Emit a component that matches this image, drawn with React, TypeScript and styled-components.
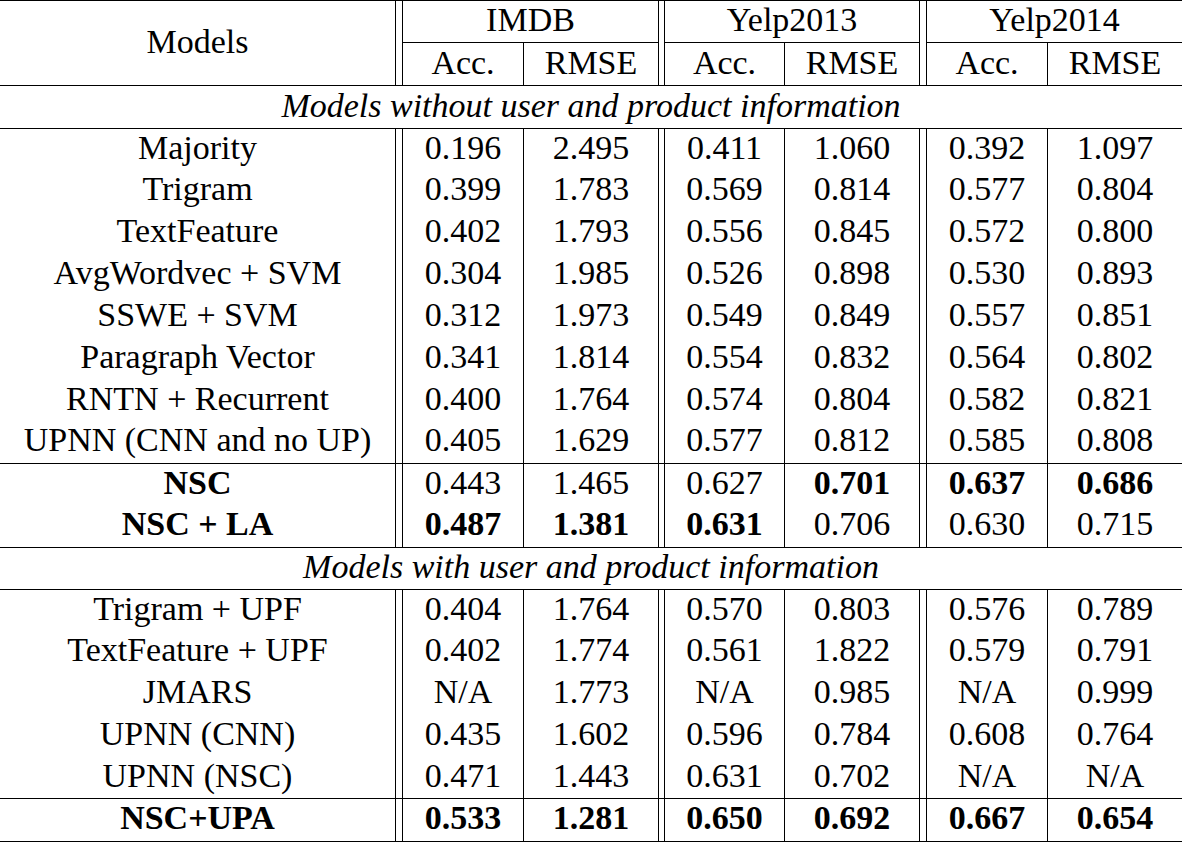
import React from "react";
import styled, { createGlobalStyle } from "styled-components";

const COLS = "395px 7px 121px 135px 6px 120px 135px 7px 121px 135px";
const LINE = "1px solid #000";

const Global = createGlobalStyle`
  html, body { margin: 0; padding: 0; background: #fff; }
  body { font-family: "Liberation Serif", "Times New Roman", serif; color: #000; }
`;

const Table = styled.div`
  width: 1182px;
  font-family: "Liberation Serif", "Times New Roman", serif;
  font-size: 34px;
  color: #000;
`;

const Header = styled.div`
  display: grid;
  grid-template-columns: ${COLS};
  grid-template-rows: 42px 42px;
  border-top: ${LINE};
`;

const HeadCell = styled.div<{ $col: string; $row: string; $line?: boolean; $under?: boolean }>`
  grid-column: ${(p) => p.$col};
  grid-row: ${(p) => p.$row};
  display: flex;
  align-items: center;
  justify-content: center;
  box-sizing: border-box;
  border-left: ${(p) => (p.$line ? LINE : "none")};
  border-bottom: ${(p) => (p.$under ? LINE : "none")};
  line-height: 1;
  padding-bottom: 3px;
  white-space: nowrap;
`;

const Row = styled.div<{ $h: number; $top?: boolean; $bottom?: boolean }>`
  display: grid;
  grid-template-columns: ${COLS};
  box-sizing: border-box;
  height: ${(p) => p.$h}px;
  border-top: ${(p) => (p.$top ? LINE : "none")};
  border-bottom: ${(p) => (p.$bottom ? LINE : "none")};
`;

const Cell = styled.div<{ $line?: boolean; $bold?: boolean }>`
  display: flex;
  align-items: center;
  justify-content: center;
  box-sizing: border-box;
  border-left: ${(p) => (p.$line ? LINE : "none")};
  font-weight: ${(p) => (p.$bold ? 700 : 400)};
  line-height: 1;
  padding-bottom: 3px;
  white-space: nowrap;
`;

const SectionRow = styled.div<{ $h: number }>`
  display: flex;
  align-items: center;
  justify-content: center;
  box-sizing: border-box;
  height: ${(p) => p.$h}px;
  border-top: ${LINE};
  font-style: italic;
  line-height: 1;
  padding-bottom: 3px;
  white-space: nowrap;
`;

type Val = string | [string, boolean];
type DataRow = { name: string; bold?: boolean; vals: Val[] };

const group1: DataRow[] = [
  { name: "Majority", vals: ["0.196", "2.495", "0.411", "1.060", "0.392", "1.097"] },
  { name: "Trigram", vals: ["0.399", "1.783", "0.569", "0.814", "0.577", "0.804"] },
  { name: "TextFeature", vals: ["0.402", "1.793", "0.556", "0.845", "0.572", "0.800"] },
  { name: "AvgWordvec + SVM", vals: ["0.304", "1.985", "0.526", "0.898", "0.530", "0.893"] },
  { name: "SSWE + SVM", vals: ["0.312", "1.973", "0.549", "0.849", "0.557", "0.851"] },
  { name: "Paragraph Vector", vals: ["0.341", "1.814", "0.554", "0.832", "0.564", "0.802"] },
  { name: "RNTN + Recurrent", vals: ["0.400", "1.764", "0.574", "0.804", "0.582", "0.821"] },
  { name: "UPNN (CNN and no UP)", vals: ["0.405", "1.629", "0.577", "0.812", "0.585", "0.808"] },
];

const group2: DataRow[] = [
  {
    name: "NSC",
    bold: true,
    vals: ["0.443", "1.465", "0.627", ["0.701", true], ["0.637", true], ["0.686", true]],
  },
  {
    name: "NSC + LA",
    bold: true,
    vals: [["0.487", true], ["1.381", true], ["0.631", true], "0.706", "0.630", "0.715"],
  },
];

const group3: DataRow[] = [
  { name: "Trigram + UPF", vals: ["0.404", "1.764", "0.570", "0.803", "0.576", "0.789"] },
  { name: "TextFeature + UPF", vals: ["0.402", "1.774", "0.561", "1.822", "0.579", "0.791"] },
  { name: "JMARS", vals: ["N/A", "1.773", "N/A", "0.985", "N/A", "0.999"] },
  { name: "UPNN (CNN)", vals: ["0.435", "1.602", "0.596", "0.784", "0.608", "0.764"] },
  { name: "UPNN (NSC)", vals: ["0.471", "1.443", "0.631", "0.702", "N/A", "N/A"] },
];

const group4: DataRow[] = [
  {
    name: "NSC+UPA",
    bold: true,
    vals: [
      ["0.533", true],
      ["1.281", true],
      ["0.650", true],
      ["0.692", true],
      ["0.667", true],
      ["0.654", true],
    ],
  },
];

function ValueCell({ v }: { v: Val }) {
  const [text, bold] = typeof v === "string" ? [v, false] : v;
  return (
    <Cell $line $bold={bold}>
      {text}
    </Cell>
  );
}

function TableRow({ row, h, top, bottom }: { row: DataRow; h: number; top?: boolean; bottom?: boolean }) {
  const v = row.vals;
  return (
    <Row $h={h} $top={top} $bottom={bottom}>
      <Cell $bold={row.bold}>{row.name}</Cell>
      <Cell $line />
      <ValueCell v={v[0]} />
      <ValueCell v={v[1]} />
      <Cell $line />
      <ValueCell v={v[2]} />
      <ValueCell v={v[3]} />
      <Cell $line />
      <ValueCell v={v[4]} />
      <ValueCell v={v[5]} />
    </Row>
  );
}

function Group({ rows, total, first, bottom }: { rows: DataRow[]; total: number; first: number; bottom?: boolean }) {
  const rest = rows.length > 1 ? (total - first) / (rows.length - 1) : 0;
  return (
    <>
      {rows.map((r, i) => (
        <TableRow
          key={r.name}
          row={r}
          h={i === 0 ? first : rest + (bottom && i === rows.length - 1 ? 1 : 0)}
          top={i === 0}
          bottom={bottom && i === rows.length - 1}
        />
      ))}
    </>
  );
}

export default function App() {
  return (
    <>
      <Global />
      <Table>
        <Header>
          <HeadCell $col="1" $row="1 / 3">Models</HeadCell>
          <HeadCell $col="2" $row="1 / 3" $line />
          <HeadCell $col="3 / 5" $row="1" $line $under>IMDB</HeadCell>
          <HeadCell $col="3" $row="2" $line>Acc.</HeadCell>
          <HeadCell $col="4" $row="2" $line>RMSE</HeadCell>
          <HeadCell $col="5" $row="1 / 3" $line />
          <HeadCell $col="6 / 8" $row="1" $line $under>Yelp2013</HeadCell>
          <HeadCell $col="6" $row="2" $line>Acc.</HeadCell>
          <HeadCell $col="7" $row="2" $line>RMSE</HeadCell>
          <HeadCell $col="8" $row="1 / 3" $line />
          <HeadCell $col="9 / 11" $row="1" $line $under>Yelp2014</HeadCell>
          <HeadCell $col="9" $row="2" $line>Acc.</HeadCell>
          <HeadCell $col="10" $row="2" $line>RMSE</HeadCell>
        </Header>
        <SectionRow $h={43}>Models without user and product information</SectionRow>
        <Group rows={group1} total={335} first={42} />
        <Group rows={group2} total={84} first={42} />
        <SectionRow $h={42}>Models with user and product information</SectionRow>
        <Group rows={group3} total={209} first={42} />
        <Group rows={group4} total={44} first={44} bottom />
      </Table>
    </>
  );
}
